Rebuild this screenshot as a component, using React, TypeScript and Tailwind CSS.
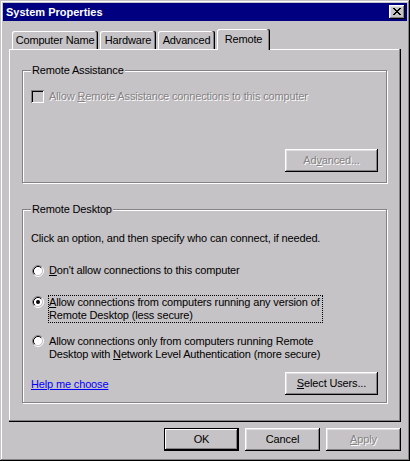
import React from 'react'

const raised =
  'bg-[#c6c3c6] shadow-[inset_-1px_-1px_#000,inset_1px_1px_#fff,inset_-2px_-2px_#848284,inset_2px_2px_#dfdfdf]'

function Radio({ checked }: { checked?: boolean }) {
  return (
    <svg width="12" height="12" viewBox="0 0 12 12" className="shrink-0">
      <circle cx="6" cy="6" r="4.5" fill="#fff" />
      <path d="M2.11 9.89 A5.5 5.5 0 0 1 9.89 2.11" fill="none" stroke="#848284" />
      <path d="M9.89 2.11 A5.5 5.5 0 0 1 2.11 9.89" fill="none" stroke="#fff" />
      <path d="M2.82 9.18 A4.5 4.5 0 0 1 9.18 2.82" fill="none" stroke="#000" />
      <path d="M9.18 2.82 A4.5 4.5 0 0 1 2.82 9.18" fill="none" stroke="#c6c3c6" />
      {checked && <circle cx="6" cy="6" r="2" fill="#000" />}
    </svg>
  )
}

function Btn({
  children,
  w,
  disabled,
  isDefault,
}: {
  children: React.ReactNode
  w: string
  disabled?: boolean
  isDefault?: boolean
}) {
  return (
    <div
      className={`${w} h-[23px] flex items-center justify-center ${
        isDefault
          ? 'bg-[#c6c3c6] shadow-[inset_0_0_0_1px_#000,inset_-2px_-2px_#000,inset_2px_2px_#fff,inset_-3px_-3px_#848284]'
          : raised
      } ${disabled ? 'text-[#848284] [text-shadow:1px_1px_0_#fff]' : 'text-black'}`}
    >
      {children}
    </div>
  )
}

function Tab({ label, w, active }: { label: string; w: string; active?: boolean }) {
  return (
    <div
      className={`${w} flex items-center justify-center rounded-t-[2px] bg-[#c6c3c6] shadow-[inset_-1px_0_#000,inset_-2px_0_#848284,inset_1px_1px_#fff] ${
        active ? 'h-[21px] -mb-[1px] relative z-10' : 'h-[18px]'
      }`}
    >
      {label}
    </div>
  )
}

export default function App() {
  return (
    <div className="w-[410px] h-[461px] bg-[#c6c3c6] p-[3px] font-['Liberation_Sans',Arial,sans-serif] text-[11px] leading-[13px] tracking-[-0.15px] text-black shadow-[inset_-1px_-1px_#000,inset_1px_1px_#c6c3c6,inset_-2px_-2px_#848284,inset_2px_2px_#fff] overflow-hidden">
      {/* title bar */}
      <div className="h-[18px] bg-[#000080] flex items-center justify-between pl-[3px] pr-[2px]">
        <span className="text-white font-bold tracking-normal">System Properties</span>
        <div className={`w-[16px] h-[14px] ${raised} flex items-start`}>
          <svg width="8" height="7" viewBox="0 0 8 7" className="ml-[4px] mt-[3px]" shapeRendering="crispEdges">
            <path
              fill="#000"
              d="M0 0h2v1H0zM6 0h2v1H6zM1 1h2v1H1zM5 1h2v1H5zM2 2h4v1H2zM3 3h2v1H3zM2 4h4v1H2zM1 5h2v1H1zM5 5h2v1H5zM0 6h2v1H0zM6 6h2v1H6z"
            />
          </svg>
        </div>
      </div>

      {/* tabs */}
      <div className="flex items-end gap-[2px] ml-[9px] mt-[8px]">
        <Tab label="Computer Name" w="w-[86px]" />
        <Tab label="Hardware" w="w-[56px]" />
        <Tab label="Advanced" w="w-[57px]" />
        <Tab label="Remote" w="w-[53px]" active />
      </div>

      {/* panel */}
      <div className="ml-[6px] w-[392px] h-[373px] pt-[21px] pl-[13px] shadow-[inset_-1px_-1px_#000,inset_-2px_-2px_#848284,inset_1px_1px_#fff]">
        {/* Remote Assistance */}
        <div className="relative w-[365px] h-[113px] border border-[#848284] shadow-[inset_1px_1px_#fff,1px_1px_#fff] flex flex-col pt-[19px] pl-[8px]">
          <span className="absolute -top-[7px] left-[8px] bg-[#c6c3c6] px-[1px]">Remote Assistance</span>
          <div className="flex items-center gap-[5px]">
            <div className="w-[13px] h-[13px] bg-[#c6c3c6] shadow-[inset_1px_1px_#848284,inset_-1px_-1px_#fff,inset_2px_2px_#000,inset_-2px_-2px_#c6c3c6]" />
            <span className="text-[#848284] [text-shadow:1px_1px_0_#fff]">
              Allow <u>R</u>emote Assistance connections to this computer
            </span>
          </div>
          <div className="self-end mr-[8px] mt-[46px]">
            <Btn w="w-[93px]" disabled>
              Ad<u>v</u>anced...
            </Btn>
          </div>
        </div>

        {/* Remote Desktop */}
        <div className="relative mt-[26px] w-[365px] h-[194px] border border-[#848284] shadow-[inset_1px_1px_#fff,1px_1px_#fff] flex flex-col pt-[22px] pl-[8px]">
          <span className="absolute -top-[7px] left-[8px] bg-[#c6c3c6] px-[1px]">Remote Desktop</span>
          <div>Click an option, and then specify who can connect, if needed.</div>

          <div className="flex items-center gap-[4px] ml-[1px] mt-[18px]">
            <Radio />
            <span className="border border-transparent">
              <u>D</u>on't allow connections to this computer
            </span>
          </div>

          <div className="flex items-start gap-[4px] ml-[1px] mt-[17px]">
            <div className="mt-[1px]">
              <Radio checked />
            </div>
            <span className="border border-dotted border-black pr-[2px]">
              <u>A</u>llow connections from computers running any version of
              <br />
              Remote Desktop (less secure)
            </span>
          </div>

          <div className="flex items-start gap-[4px] ml-[1px] mt-[11px]">
            <div className="mt-[1px]">
              <Radio />
            </div>
            <span className="border border-transparent">
              Allow connections only from computers running Remote
              <br />
              Desktop with <u>N</u>etwork Level Authentication (more secure)
            </span>
          </div>

          <div className="flex items-center justify-between mr-[8px] mt-[10px]">
            <span className="text-[#0000ff] underline mt-[2px]">Help me choose</span>
            <Btn w="w-[93px]">
              <u>S</u>elect Users...
            </Btn>
          </div>
        </div>
      </div>

      {/* dialog buttons */}
      <div className="ml-[6px] w-[392px] mt-[6px] flex justify-end gap-[6px]">
        <Btn w="w-[75px]" isDefault>
          OK
        </Btn>
        <Btn w="w-[75px]">Cancel</Btn>
        <Btn w="w-[75px]" disabled>
          <u>A</u>pply
        </Btn>
      </div>
    </div>
  )
}
